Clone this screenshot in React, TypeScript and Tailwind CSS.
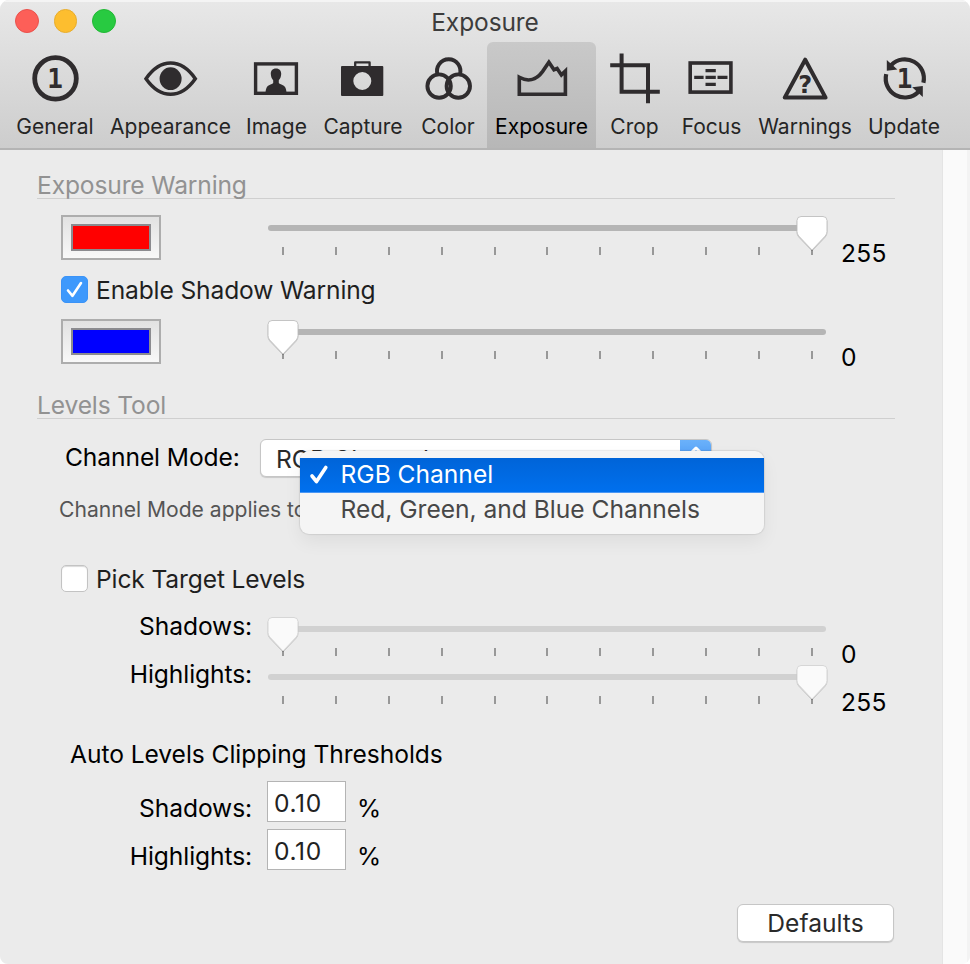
import { useState } from 'react';
import type { ReactNode } from 'react';
import clsx from 'clsx';

const INK = '#2f2c2e';

const icons: Record<string, ReactNode> = {
  General: (
    <>
      <circle cx="30.5" cy="28.4" r="20.8" fill="none" stroke={INK} strokeWidth="4.8" />
      <text x="30.2" y="38" textAnchor="middle" className="font-['DejaVu_Sans_Mono',monospace] text-[26px] font-bold">1</text>
    </>
  ),
  Appearance: (
    <>
      <path
        d="M5 28.7C12.4 18.2 20.4 13.1 29.6 13.1S46.9 18.2 54.3 28.7C46.9 39.2 38.9 44.3 29.6 44.3S12.4 39.2 5 28.7Z"
        fill="none" stroke={INK} strokeWidth="3.5"
      />
      <ellipse cx="29.6" cy="28.7" rx="11" ry="11.4" />
    </>
  ),
  Image: (
    <>
      <rect x="8.6" y="13.9" width="40.8" height="29.4" fill="none" stroke={INK} strokeWidth="3.4" />
      <path d="M29 18.4c-3.6 0-5.4 2.4-5.2 5.6.2 3 1 4.8 2.4 6.2v2.8c-1 1.4-5.2 1.8-6.4 4.2-.8 1.6-1.2 3-1.3 6h21c-.1-3-.5-4.4-1.3-6-1.2-2.4-5.400-2.800-6.400-4.200v-2.800c1.4-1.4 2.2-3.2 2.4-6.200.2-3.200-1.600-5.600-5.200-5.600Z" />
    </>
  ),
  Capture: (
    <>
      <path d="M22.2 17v-4.6h14.4V17" fill="none" stroke={INK} strokeWidth="2.3" strokeLinejoin="round" />
      <path
        fillRule="evenodd"
        d="M9 16h40.3a1 1 0 0 1 1 1v28a1 1 0 0 1-1 1H9a1 1 0 0 1-1-1V17a1 1 0 0 1 1-1ZM38.3 31a9 9 0 1 0-18 0a9 9 0 1 0 18 0Z"
      />
    </>
  ),
  Color: (
    <g fill="none" stroke={INK} strokeWidth="3.9">
      <path d="M19.6 24.6A11.7 11.7 0 1 1 41.8 24.6" />
      <circle cx="21.1" cy="36.1" r="11.7" />
      <circle cx="40.3" cy="36.1" r="11.7" />
    </g>
  ),
  Exposure: (
    <path
      d="M7.3 27.3C15.5 31.9 24 30.6 30.5 21.6L36.9 12.2L42 19.7L45.1 18.5L49.4 24.9L53.4 21V44.2H7.3Z"
      fill="none" stroke={INK} strokeWidth="3.6"
    />
  ),
  Crop: (
    <path d="M5.2 15.3H43V53.3M16.6 3.5V41.7H54.8" fill="none" stroke={INK} strokeWidth="4" />
  ),
  Focus: (
    <>
      <rect x="8.2" y="13" width="40.7" height="29.1" fill="none" stroke={INK} strokeWidth="3.6" />
      <path d="M23.5 19h10.3v3.2H23.5ZM12.2 25.8h9.4V29h-9.4ZM23.5 25.8h10.3V29H23.5ZM35.5 25.8h10V29h-10ZM23.5 32.7h10.3v3.2H23.5Z" />
    </>
  ),
  Warnings: (
    <>
      <path d="M30.2 9.7L50.6 47.6H9.7Z" fill="none" stroke={INK} strokeWidth="4" strokeLinejoin="round" />
      <text x="30.2" y="43" textAnchor="middle" className="font-['DejaVu_Sans',sans-serif] text-[24px] font-bold">?</text>
    </>
  ),
  Update: (
    <>
      {[0, 180].map((angle) => (
        <g key={angle} transform={`rotate(${angle} 30.8 28.4)`}>
          <path d="M17.3 14.9A19.1 19.1 0 0 1 49.4 32.7" fill="none" stroke={INK} strokeWidth="4.2" />
          <path d="M12.8 9.9V20.7L23.4 19.5Z" />
        </g>
      ))}
      <text x="30.5" y="38" textAnchor="middle" className="font-['DejaVu_Sans_Mono',monospace] text-[26px] font-bold">1</text>
    </>
  ),
};

const tabs = [
  { name: 'General', width: 'w-[94px]' },
  { name: 'Appearance', width: 'w-[137px]' },
  { name: 'Image', width: 'w-[75px]' },
  { name: 'Capture', width: 'w-[98px]' },
  { name: 'Color', width: 'w-[72px] mr-[3px]' },
  { name: 'Exposure', width: 'w-[109px]' },
  { name: 'Crop', width: 'w-[77px]' },
  { name: 'Focus', width: 'w-[77px]' },
  { name: 'Warnings', width: 'w-[110px]' },
  { name: 'Update', width: 'w-[88px]' },
];

function Toolbar({ active, onSelect }: { active: string; onSelect: (name: string) => void }) {
  return (
    <nav className="flex h-[106px] pl-2">
      {tabs.map(({ name, width }) => (
        <button
          key={name}
          type="button"
          onClick={() => onSelect(name)}
          className={clsx(
            'flex shrink-0 flex-col items-center rounded-t-md pt-2',
            width,
            active === name ? 'bg-linear-to-b from-[#c9c9c9] to-[#b7b7b7] text-black' : 'text-[#252525]'
          )}
        >
          <svg width="60" height="56" viewBox="0 0 60 56" fill={INK} className="shrink-0">{icons[name]}</svg>
          <span className="mt-[7px] text-[21px] leading-7">{name}</span>
        </button>
      ))}
    </nav>
  );
}

function SectionTitle({ children }: { children: ReactNode }) {
  return (
    <h2 className="ml-[37px] h-[33px] w-[858px] border-b border-[#cfcfcf] pt-[6px] text-[24.6px] leading-[27px] tracking-[-0.15px] text-[#929292]">
      {children}
    </h2>
  );
}

function Swatch({ color }: { color: string }) {
  return (
    <div className="h-[45px] w-[100px] border-2 border-[#adadad] bg-linear-to-b from-[#e2e2e2] to-[#f8f8f8] px-2 py-[7px]">
      <div className={clsx('h-[27px] border-2 border-[#8b8b8f]', color)} />
    </div>
  );
}

interface SliderProps {
  value: number;
  disabled?: boolean;
}

function Slider({ value, disabled = false }: SliderProps) {
  return (
    <div className="relative w-[558px] pt-[10px]">
      <div className={clsx('h-[6px] rounded-full', disabled ? 'bg-[#d1d1d1]' : 'bg-[#b5b5b5]')} />
      <div className="mt-4 flex justify-between pr-[13px] pl-[14px]">
        {Array.from({ length: 11 }, (_, i) => (
          <div key={i} className="h-2 w-[2px] bg-[#989898]" />
        ))}
      </div>
      <svg
        width="34" height="38" viewBox="0 0 34 38"
        className="absolute top-0 drop-shadow-[0_1px_0.5px_rgba(0,0,0,0.15)]"
        style={{ left: -2 + (value / 255) * 529 }}
      >
        <path
          d="M6 1.500H28Q32 1.500 32 5.500V16.500Q32 19 30.300 21L17 35L3.700 21Q2 19 2 16.500V5.500Q2 1.500 6 1.500Z"
          fill={disabled ? '#fafafa' : '#ffffff'} stroke={disabled ? '#d6d6d6' : '#c4c4c4'} strokeWidth="1"
        />
      </svg>
    </div>
  );
}

function Checkbox({ label, checked, onChange }: { label: string; checked: boolean; onChange: () => void }) {
  return (
    <label className="ml-[61px] flex h-[27px] items-center gap-2 text-[24.6px] tracking-[-0.14px] text-[#1f1f1f]">
      <input type="checkbox" className="sr-only" checked={checked} onChange={onChange} />
      <span
        className={clsx(
          'flex size-[27px] items-center justify-center rounded-[5px] border',
          checked ? 'border-[#3b93f7] bg-[#3e99fc]' : 'border-[#c3c3c3] bg-white shadow-[inset_0_1px_1px_rgba(0,0,0,0.15)]'
        )}
      >
        {checked && (
          <svg width="25" height="25" viewBox="0 0 25 25">
            <path d="M6 13.5L10.5 18.8L19 6" fill="none" stroke="white" strokeWidth="2.6" strokeLinecap="round" strokeLinejoin="round" />
          </svg>
        )}
      </span>
      <span className="pt-[2px]">{label}</span>
    </label>
  );
}

function WarningRow({ color, value }: { color: string; value: number }) {
  return (
    <div className="flex items-start pt-4 pl-[61px]">
      <Swatch color={color} />
      <div className="w-[107px]" />
      <Slider value={value} />
      <span className="mt-6 ml-[15px] text-[24.6px] leading-[29px] tracking-[0.3px]">{value}</span>
    </div>
  );
}

function LevelRow({ label, value }: { label: string; value: number }) {
  return (
    <div className="flex h-12 items-start">
      <span className="w-[252px] text-right text-[24.6px] leading-5 tracking-[-0.1px]">{label}</span>
      <div className="w-4" />
      <Slider value={value} disabled />
      <span className="mt-6 ml-[15px] text-[24.6px] leading-7 tracking-[0.3px]">{value}</span>
    </div>
  );
}

function ThresholdRow({ label }: { label: string }) {
  const [amount, setAmount] = useState('0.10');
  return (
    <div className="flex h-12 items-start text-[24.6px]">
      <span className="mt-3 w-[252px] text-right leading-[30px] tracking-[-0.1px]">{label}</span>
      <input
        value={amount}
        onChange={(e) => setAmount(e.target.value)}
        className="ml-[15px] h-[41px] w-[79px] border border-[#b4b4b4] bg-white pt-[3px] pl-[6px] tracking-[0.6px] text-[#222] outline-none"
      />
      <span className="mt-3 ml-[11px] leading-[30px]">%</span>
    </div>
  );
}

const channelModes = ['RGB Channel', 'Red, Green, and Blue Channels'];

function ChannelMode() {
  const [mode, setMode] = useState(channelModes[0]);
  return (
    <div className="relative mt-5 flex h-[38px]">
      <span className="w-[260px] pl-[65px] text-[24.6px] leading-9 tracking-[-0.1px]">Channel Mode:</span>
      <div className="flex w-[452px] overflow-hidden rounded-md border border-[#c6c6c6] bg-white shadow-[0_1px_1px_rgba(0,0,0,0.15)]">
        <span className="flex-1 pl-[15px] text-[24.6px] leading-[38px] text-[#2a2a2a]">{mode}</span>
        <span className="-mt-px -mr-px flex w-8 justify-center bg-linear-to-b from-[#6cb2fa] to-[#3b8ff5]">
          <svg width="14" height="26" viewBox="0 0 14 26" className="mt-[7px]">
            <path d="M2 7L7 2L12 7M2 19L7 24L12 19" fill="none" stroke="white" strokeWidth="3" strokeLinecap="round" strokeLinejoin="round" />
          </svg>
        </span>
      </div>
      <ul className="absolute top-3 left-[300px] z-10 h-[83px] w-[464px] rounded-[9px] bg-[#f5f5f5] pt-[7px] text-[24.6px] text-[#474747] shadow-[0_0_1px_1px_rgba(0,0,0,0.08),0_8px_18px_rgba(0,0,0,0.06)]">
        {channelModes.map((item) => (
          <li
            key={item}
            onClick={() => setMode(item)}
            className={clsx(
              'flex h-[34.5px] items-center',
              item === mode && 'border-b border-[#4a97f5] bg-linear-to-b from-[#0064d8] to-[#0070ee] text-white'
            )}
          >
            <span className="flex w-[40.5px] justify-center pr-[2px]">
              {item === mode && (
                <svg width="20" height="22" viewBox="0 0 20 22">
                  <path d="M3 12L7.5 17.5L16.8 3.5" fill="none" stroke="white" strokeWidth="3.6" strokeLinecap="round" strokeLinejoin="round" />
                </svg>
              )}
            </span>
            <span className="tracking-[-0.02px]">{item}</span>
          </li>
        ))}
      </ul>
    </div>
  );
}

export default function App() {
  const [tab, setTab] = useState('Exposure');
  const [shadowWarning, setShadowWarning] = useState(true);
  const [pickTargets, setPickTargets] = useState(false);

  return (
    <div className="h-[964px] w-[970px] bg-white font-['Inter','Liberation_Sans',sans-serif] text-black">
      <div className="flex h-full flex-col overflow-hidden rounded-t-[9px] rounded-b-[8px] bg-[#fafafa]">
        <header className="h-[150px] shrink-0 border-b-2 border-[#b4b4b4] bg-linear-to-b from-[#e8e8e8] to-[#cdcdcd] shadow-[inset_0_2px_0_#f4f4f4]">
          <div className="flex h-[42px] items-center">
            <div className="flex w-[200px] gap-[15px] pl-[15px]">
              <span className="size-[23.5px] rounded-full border border-[#e9514c] bg-[#fd5f58]" />
              <span className="size-[23.5px] rounded-full border border-[#e7ac2c] bg-[#fdbe2f]" />
              <span className="size-[23.5px] rounded-full border border-[#22b835] bg-[#28ca41]" />
            </div>
            <h1 className="w-[570px] pt-[2px] text-center text-[24.5px] tracking-[-0.1px] text-[#3c3c3c]">{tab}</h1>
          </div>
          <Toolbar active={tab} onSelect={setTab} />
        </header>

        <div className="flex flex-1">
          <main className="w-[943px] border-r border-[#e4e4e4] bg-[#ebebeb] pt-4">
            <SectionTitle>Exposure Warning</SectionTitle>
            <div className="h-[77px]">
              <WarningRow color="bg-[#ff0000]" value={255} />
            </div>
            <Checkbox label="Enable Shadow Warning" checked={shadowWarning} onChange={() => setShadowWarning(!shadowWarning)} />
            <div className="h-[83px]">
              <WarningRow color="bg-[#0000ff]" value={0} />
            </div>

            <SectionTitle>Levels Tool</SectionTitle>
            <ChannelMode />
            <p className="mt-[19px] pl-[59px] text-[21.1px] leading-7 text-[#555]">Channel Mode applies to</p>

            <div className="mt-[41px]">
              <Checkbox label="Pick Target Levels" checked={pickTargets} onChange={() => setPickTargets(!pickTargets)} />
            </div>
            <div className="mt-6">
              <LevelRow label="Shadows:" value={0} />
              <LevelRow label="Highlights:" value={255} />
            </div>

            <h3 className="mt-7 pl-[70px] text-[24.6px] leading-[29px] tracking-[-0.06px]">Auto Levels Clipping Thresholds</h3>
            <div className="mt-3">
              <ThresholdRow label="Shadows:" />
              <ThresholdRow label="Highlights:" />
            </div>

            <div className="mt-[27px] flex justify-end pr-[48px]">
              <button
                type="button"
                className="h-[38px] w-[157px] rounded-md border border-[#c6c6c6] bg-white text-[24.6px] text-[#2a2a2a] shadow-[0_1px_1px_rgba(0,0,0,0.15)]"
              >
                Defaults
              </button>
            </div>
          </main>
          <div className="ml-6 flex-1 bg-[#f3f3f3]" />
        </div>
      </div>
    </div>
  );
}
